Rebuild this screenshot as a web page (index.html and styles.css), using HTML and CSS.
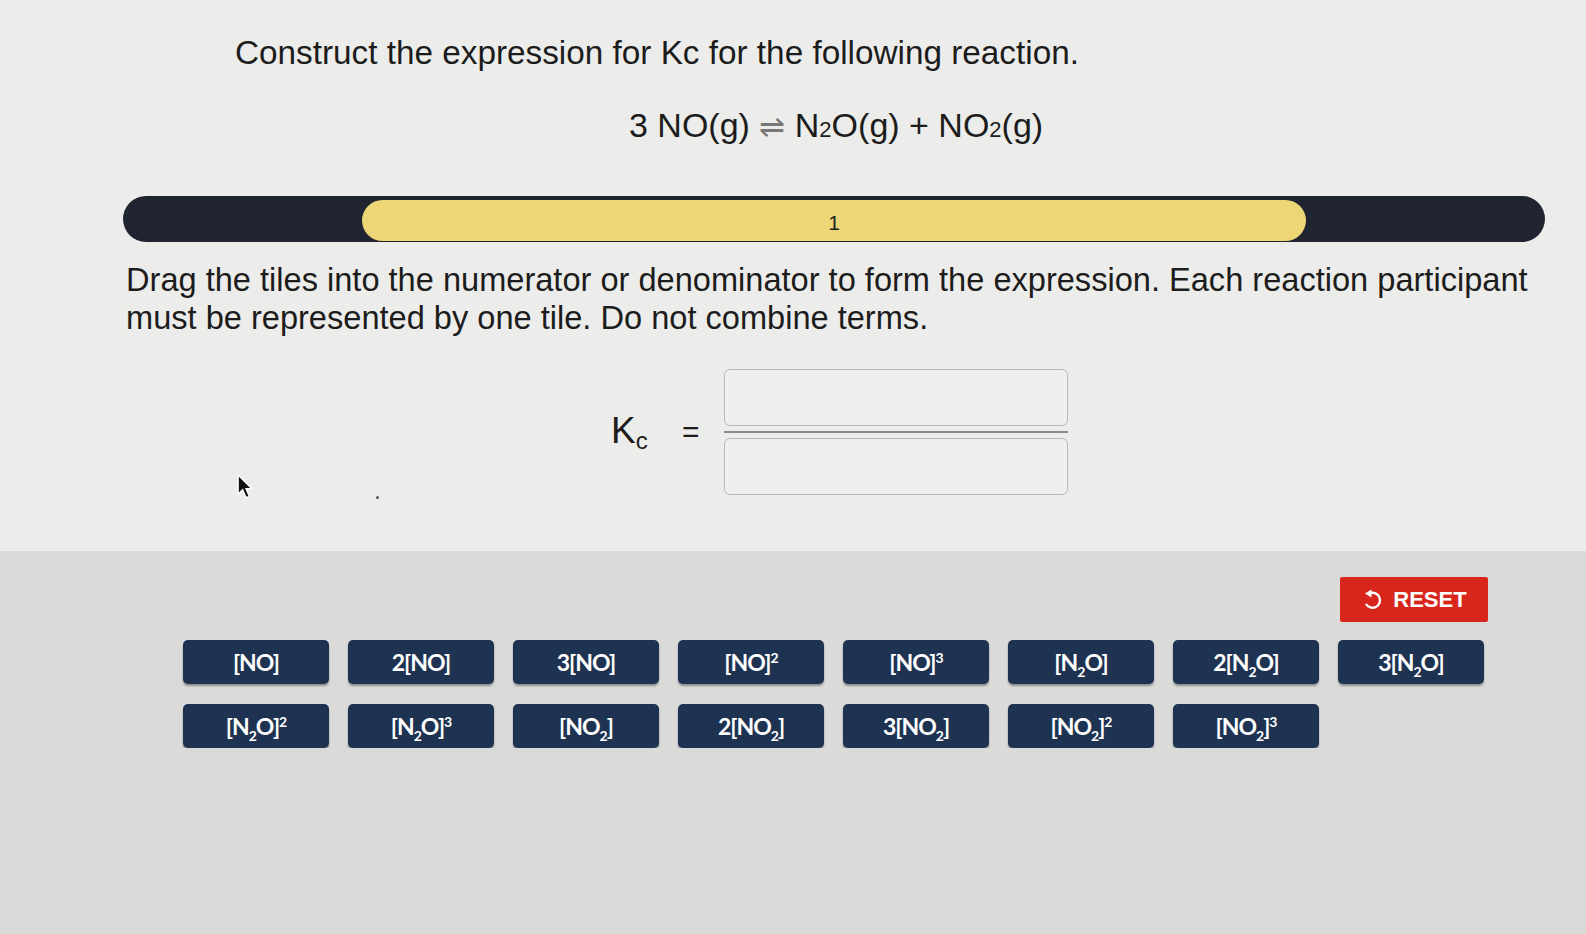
FILE: index.html
```html
<!DOCTYPE html>
<html>
<head>
    <link rel="stylesheet" href="styles.css">
</head>
<body>
  <div class="question">
    <h1 class="prompt">Construct the expression for Kc for the following reaction.</h1>
    <div class="reaction">3 NO(g) <span class="eq-arrow">&#8652;</span> N<small>2</small>O(g) + NO<small>2</small>(g)</div>

    <div class="progress">
      <div class="progress-fill">1</div>
    </div>

    <p class="instructions">Drag the tiles into the numerator or denominator to form the expression. Each reaction participant must be represented by one tile. Do not combine terms.</p>

    <div class="expression">
      <div class="kc">K<sub>c</sub></div>
      <div class="equals">=</div>
      <div class="fraction">
        <div class="drop-box"></div>
        <div class="fraction-line"></div>
        <div class="drop-box"></div>
      </div>
    </div>

    <svg class="cursor" width="18" height="27" viewBox="0 0 16 24">
      <path d="M1 1 L1 18 L5 14 L8 21 L11 20 L8 13 L13 13 Z" fill="#111" stroke="#fff" stroke-width="1.2"/>
    </svg>
    <span class="speck"></span>
  </div>

  <div class="tray">
    <div class="tray-top">
      <button class="reset-btn">
        <svg width="24" height="24" viewBox="0 0 24 24">
          <path d="M9 5.2 A7.5 7.5 0 1 1 5 16" fill="none" stroke="#fff" stroke-width="2.4"/>
          <path d="M4 5.5 L10.5 1.5 L10.5 9.5 Z" fill="#fff"/>
        </svg>
        RESET
      </button>
    </div>
    <div class="tiles">
      <div class="tile">[NO]</div>
      <div class="tile">2[NO]</div>
      <div class="tile">3[NO]</div>
      <div class="tile">[NO]<sup>2</sup></div>
      <div class="tile">[NO]<sup>3</sup></div>
      <div class="tile">[N<sub>2</sub>O]</div>
      <div class="tile">2[N<sub>2</sub>O]</div>
      <div class="tile">3[N<sub>2</sub>O]</div>
      <div class="tile">[N<sub>2</sub>O]<sup>2</sup></div>
      <div class="tile">[N<sub>2</sub>O]<sup>3</sup></div>
      <div class="tile">[NO<sub>2</sub>]</div>
      <div class="tile">2[NO<sub>2</sub>]</div>
      <div class="tile">3[NO<sub>2</sub>]</div>
      <div class="tile">[NO<sub>2</sub>]<sup>2</sup></div>
      <div class="tile">[NO<sub>2</sub>]<sup>3</sup></div>
    </div>
  </div>
</body>
</html>
```

FILE: styles.css
```css
body {
    margin: 0;
    background: #dadad8;
    font-family: "Liberation Sans", Arial, sans-serif;
    color: #1c1c1c;
}

.question {
    position: relative;
    height: 551px;
    background: #ececea;
    padding: 0 41px 0 123px;
    box-sizing: border-box;
    overflow: hidden;
}

.prompt {
    margin: 0;
    padding: 31px 0 0 112px;
    font-size: 33.3px;
    font-weight: normal;
    line-height: 44px;
}

.reaction {
    margin-top: 28px;
    padding-left: 506px;
    font-size: 34px;
    line-height: 44px;
}

.reaction small {
    font-size: 22px;
}

.eq-arrow {
    color: #777;
    font-size: 31px;
}

.progress {
    margin-top: 44px;
    height: 46px;
    border-radius: 23px;
    background: #1f2430;
    padding: 4px 239px 1px 239px;
    box-sizing: border-box;
}

.progress-fill {
    height: 41px;
    border-radius: 21px;
    background: #ecd676;
    text-align: center;
    font-size: 21px;
    line-height: 46px;
    color: #222;
}

.instructions {
    margin: 19px -6px 0 3px;
    font-size: 32.6px;
    line-height: 38px;
}

.expression {
    display: flex;
    align-items: center;
    margin: 32px 0 0 488px;
}

.kc {
    width: 71px;
    font-size: 37px;
}

.kc sub {
    font-size: 24px;
    vertical-align: -6px;
}

.equals {
    width: 42px;
    font-size: 30px;
}

.fraction {
    display: flex;
    flex-direction: column;
    gap: 5px;
    width: 344px;
}

.drop-box {
    height: 55px;
    border: 1px solid #b8b8b6;
    border-radius: 6px;
    background: #efefed;
}

.fraction-line {
    height: 2px;
    background: #8a8a88;
}

.cursor {
    position: absolute;
    left: 237px;
    top: 474px;
}

.speck {
    position: absolute;
    left: 376px;
    top: 496px;
    width: 3px;
    height: 3px;
    border-radius: 50%;
    background: #555;
}

.tray {
    padding: 26px 0 0 183px;
}

.tray-top {
    display: flex;
    width: 1305px;
    justify-content: flex-end;
}

.reset-btn {
    display: flex;
    align-items: center;
    justify-content: center;
    gap: 8px;
    width: 148px;
    height: 45px;
    border: none;
    border-radius: 2px;
    background: #d8261d;
    color: #fff;
    font-family: "Liberation Sans", Arial, sans-serif;
    font-weight: bold;
    font-size: 22px;
}

.tiles {
    display: grid;
    grid-template-columns: repeat(8, 146px);
    column-gap: 19px;
    row-gap: 20px;
    margin-top: 18px;
}

.tile {
    height: 44px;
    border-radius: 5px;
    background: #1e3352;
    box-shadow: 0 2px 2px rgba(0, 0, 0, 0.35);
    color: #fff;
    font-family: Lato, "Liberation Sans", sans-serif;
    font-weight: bold;
    font-size: 23px;
    letter-spacing: -1px;
    line-height: 44px;
    text-align: center;
}

.tile sub {
    font-size: 14px;
    vertical-align: -6px;
    line-height: 0;
}

.tile sup {
    font-size: 14px;
    vertical-align: 8px;
    line-height: 0;
}
```
